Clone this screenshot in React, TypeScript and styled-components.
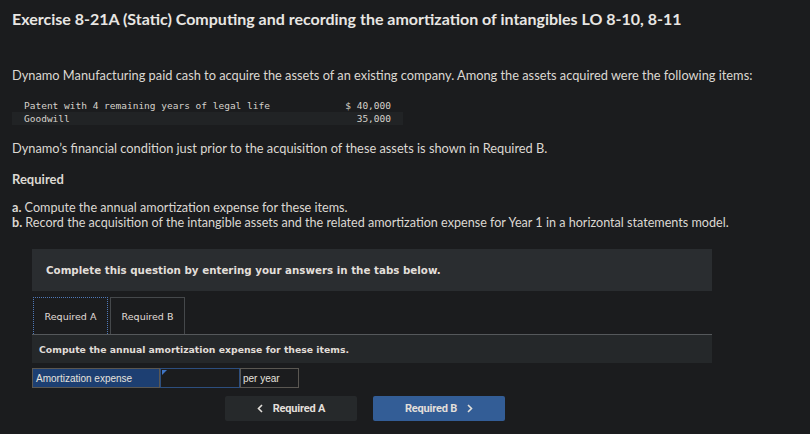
import styled, { createGlobalStyle } from "styled-components";

const GlobalStyle = createGlobalStyle`
  html, body {
    margin: 0;
    padding: 0;
    background: #1b1c1e;
  }
  body {
    font-family: "Lato", "Liberation Sans", sans-serif;
    color: #dcd8d2;
  }
`;

const Page = styled.div`
  padding: 10px 12px 0 12px;
  width: 810px;
  height: 434px;
  box-sizing: border-box;
  overflow: hidden;
`;

const Title = styled.h1`
  margin: 0;
  font-size: 16px;
  line-height: 18px;
  font-weight: 700;
  color: #e8e6e3;
`;

const Para = styled.p<{ $top?: number }>`
  margin: ${(p) => p.$top ?? 0}px 0 0 0;
  font-size: 12.8px;
  line-height: 16px;
`;

const ItemTable = styled.table`
  margin-top: 16px;
  border-collapse: collapse;
  width: 391px;
  font-family: "DejaVu Sans Mono", "Liberation Mono", monospace;
  font-size: 9.5px;
  color: #d6d2cc;
`;

const ItemRow = styled.tr<{ $shaded?: boolean }>`
  background: ${(p) => (p.$shaded ? "#212325" : "transparent")};
  height: 13px;
`;

const ItemCell = styled.td<{ $right?: boolean }>`
  padding: 0 12px;
  line-height: 13px;
  text-align: ${(p) => (p.$right ? "right" : "left")};
`;

const Heading = styled.div`
  margin-top: 15px;
  font-size: 13px;
  line-height: 16px;
  font-weight: 700;
`;

const Steps = styled.div`
  margin-top: 13px;
  font-size: 12.6px;
  line-height: 15px;
`;

const StepKey = styled.b`
  font-weight: 700;
`;

const Question = styled.div`
  margin: 19px 0 0 20px;
  width: 680px;
`;

const Banner = styled.div`
  background: #2a2d30;
  height: 42px;
  display: flex;
  align-items: center;
  padding-left: 14px;
  font-family: "DejaVu Sans", Verdana, sans-serif;
  font-weight: 700;
  font-size: 10.3px;
  color: #e2dfda;
`;

const Tabs = styled.div`
  display: flex;
  gap: 2px;
  margin-top: 6px;
  padding-left: 1px;
`;

const Tab = styled.div<{ $active?: boolean }>`
  width: 75px;
  height: 37px;
  box-sizing: border-box;
  display: flex;
  align-items: center;
  justify-content: center;
  font-family: "DejaVu Sans", Verdana, sans-serif;
  font-size: 9.5px;
  color: #e0ddd8;
  border: 1px ${(p) => (p.$active ? "dotted #4f78b8" : "solid #45484b")};
  border-bottom: none;
  background: #1b1c1e;
`;

const Panel = styled.div`
  background: #25282a;
  border-top: 1px solid #55585b;
  height: 28px;
  display: flex;
  align-items: center;
  padding-left: 7px;
  font-family: "DejaVu Sans", Verdana, sans-serif;
  font-weight: 700;
  font-size: 9.3px;
  color: #e0ddd8;
`;

const EntryRow = styled.div`
  display: flex;
  margin-top: 5px;
  height: 20px;
  font-family: "Liberation Sans", Arial, sans-serif;
  font-size: 10px;
`;

const EntryLabel = styled.div`
  width: 128px;
  box-sizing: border-box;
  background: #1d3f72;
  border: 1px solid #5a5752;
  display: flex;
  align-items: center;
  padding-left: 3px;
  color: #e6e3de;
`;

const EntryInput = styled.div`
  position: relative;
  width: 80px;
  box-sizing: border-box;
  border: 1px solid #2d4e7e;
  background: #1b1c1e;
`;

const Marker = styled.span`
  position: absolute;
  left: 1px;
  top: 1px;
  width: 0;
  height: 0;
  border-top: 5px solid #3f74c4;
  border-right: 5px solid transparent;
`;

const EntryUnit = styled.div`
  width: 59px;
  box-sizing: border-box;
  border: 1px solid #5a5752;
  display: flex;
  align-items: center;
  padding-left: 2px;
  color: #e6e3de;
`;

const Nav = styled.div`
  display: flex;
  gap: 16px;
  margin-top: 8px;
  padding-left: 193px;
`;

const NavButton = styled.div<{ $primary?: boolean }>`
  width: 132px;
  height: 25px;
  border-radius: 2px;
  background: ${(p) => (p.$primary ? "#335d96" : "#26292b")};
  display: flex;
  align-items: center;
  justify-content: center;
  gap: 10px;
  font-family: "Roboto", "Liberation Sans", sans-serif;
  font-weight: 700;
  font-size: 11px;
  letter-spacing: -0.2px;
  color: #e2dfda;
`;

const Chevron = ({ dir }: { dir: "left" | "right" }) => (
  <svg width="6" height="9" viewBox="0 0 6 9">
    <path
      d={dir === "left" ? "M5 1 L1.5 4.5 L5 8" : "M1 1 L4.5 4.5 L1 8"}
      fill="none"
      stroke="#e2dfda"
      strokeWidth="1.6"
    />
  </svg>
);

export default function App() {
  return (
    <>
      <GlobalStyle />
      <Page>
        <Title>
          Exercise 8-21A (Static) Computing and recording the amortization of intangibles LO 8-10, 8-11
        </Title>
        <Para $top={39}>
          Dynamo Manufacturing paid cash to acquire the assets of an existing company. Among the assets
          acquired were the following items:
        </Para>
        <ItemTable>
          <tbody>
            <ItemRow>
              <ItemCell>Patent with 4 remaining years of legal life</ItemCell>
              <ItemCell $right>$ 40,000</ItemCell>
            </ItemRow>
            <ItemRow $shaded>
              <ItemCell>Goodwill</ItemCell>
              <ItemCell $right>35,000</ItemCell>
            </ItemRow>
          </tbody>
        </ItemTable>
        <Para $top={15}>
          Dynamo’s financial condition just prior to the acquisition of these assets is shown in Required B.
        </Para>
        <Heading>Required</Heading>
        <Steps>
          <div>
            <StepKey>a.</StepKey> Compute the annual amortization expense for these items.
          </div>
          <div>
            <StepKey>b.</StepKey> Record the acquisition of the intangible assets and the related amortization
            expense for Year 1 in a horizontal statements model.
          </div>
        </Steps>
        <Question>
          <Banner>Complete this question by entering your answers in the tabs below.</Banner>
          <Tabs>
            <Tab $active>Required A</Tab>
            <Tab>Required B</Tab>
          </Tabs>
          <Panel>Compute the annual amortization expense for these items.</Panel>
          <EntryRow>
            <EntryLabel>Amortization expense</EntryLabel>
            <EntryInput>
              <Marker />
            </EntryInput>
            <EntryUnit>per year</EntryUnit>
          </EntryRow>
          <Nav>
            <NavButton>
              <Chevron dir="left" />
              Required A
            </NavButton>
            <NavButton $primary>
              Required B
              <Chevron dir="right" />
            </NavButton>
          </Nav>
        </Question>
      </Page>
    </>
  );
}
